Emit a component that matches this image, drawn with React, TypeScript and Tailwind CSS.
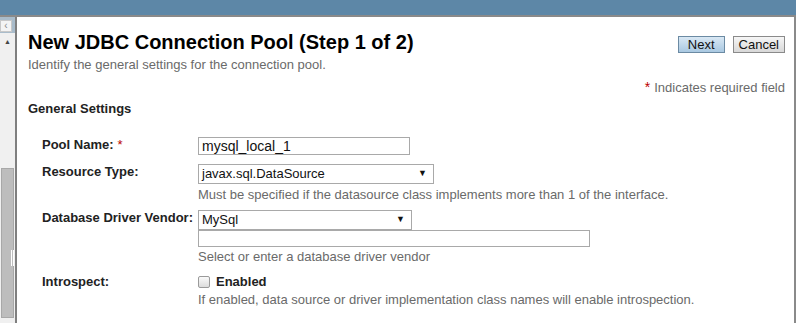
import React from 'react'

const font = { fontFamily: '"Liberation Sans", Arial, sans-serif' }

function Label({ children, required }: { children: React.ReactNode; required?: boolean }) {
  return (
    <div className="w-[156px] shrink-0 text-[13px] font-bold text-[#222] leading-[16px]">
      {children}
      {required && <span className="ml-1 text-[#b00] font-normal align-top text-[13px]">*</span>}
    </div>
  )
}

function Select({ value, width }: { value: string; width: string }) {
  return (
    <div className={`${width} h-[20px] border border-[#a9a9a9] bg-white flex items-center justify-between pl-[3px] pr-[6px] text-[13px] text-[#111]`}>
      <span>{value}</span>
      <span className="text-[9px]">▼</span>
    </div>
  )
}

export default function App() {
  return (
    <div className="w-[796px] h-[323px] bg-white overflow-hidden flex flex-col" style={font}>
      {/* top banner */}
      <div className="h-[15px] bg-[#5d87a7] shrink-0" />
      <div className="h-[2px] bg-[#8a8a8a] shrink-0" />
      <div className="flex flex-1 min-h-0">
        {/* left collapsed nav */}
        <div className="w-[15px] shrink-0 flex flex-col bg-[#f0f0f0]">
          <div className="h-[16px] bg-[#a9bccb] flex items-center pt-[2px]">
            <div className="w-[12px] h-[12px] bg-[#f4f4f4] border border-[#c8c8c8] flex items-center justify-center text-[10px] leading-none text-[#888]">
              ‹
            </div>
          </div>
          <div className="h-[135px] flex justify-center pt-[5px]">
            <span className="text-[7px] leading-none text-[#444]">▲</span>
          </div>
          <div className="flex-1 mx-[1px] mb-[5px] bg-[#bdbdbd] border border-[#a8a8a8] flex items-center justify-end">
            <div className="w-[3px] h-[16px] border-x border-white mr-[-1px] mt-[30px]" />
          </div>
        </div>
        <div className="w-[2px] bg-[#7f7f7f] shrink-0" />

        {/* main content */}
        <div className="flex-1 min-w-0 pl-[11px] pr-[9px] border-r-2 border-[#8a8a8a]">
          <div className="flex items-start justify-between pt-[13px]">
            <h1 className="text-[20px] font-bold leading-[24px] text-black">New JDBC Connection Pool (Step 1 of 2)</h1>
            <div className="flex gap-[8px] mt-[6px]">
              <button className="h-[17px] px-[9px] text-[13px] leading-none text-[#111] border border-[#6b8aa3] bg-gradient-to-b from-[#d9e8f4] to-[#a9c8e1]">
                Next
              </button>
              <button className="h-[17px] px-[5px] text-[13px] leading-none text-[#111] border border-[#8a8a8a] bg-gradient-to-b from-[#f6f6f6] to-[#d8d8d8]">
                Cancel
              </button>
            </div>
          </div>
          <p className="text-[13px] leading-[15px] text-[#6a6a6a] mt-[3px]">Identify the general settings for the connection pool.</p>
          <p className="text-[13px] leading-[15px] text-[#6a6a6a] text-right mt-[8px]">
            <span className="text-[#b00] text-[14px] mr-[4px]">*</span>Indicates required field
          </p>
          <h2 className="text-[13px] font-bold leading-[16px] text-[#222] mt-[6px]">General Settings</h2>

          <div className="pl-[14px] mt-[20px] flex flex-col">
            <div className="flex items-start">
              <Label required>Pool Name:</Label>
              <div className="w-[212px] h-[18px] border border-[#a9a9a9] bg-white pl-[3px] text-[14px] leading-[16px] text-[#111]">
                mysql_local_1
              </div>
            </div>

            <div className="flex items-start mt-[9px]">
              <Label>Resource Type:</Label>
              <div>
                <Select value="javax.sql.DataSource" width="w-[236px]" />
                <p className="text-[13px] leading-[15px] text-[#6a6a6a] mt-[3px]">
                  Must be specified if the datasource class implements more than 1 of the interface.
                </p>
              </div>
            </div>

            <div className="flex items-start mt-[8px]">
              <Label>Database Driver Vendor:</Label>
              <div>
                <Select value="MySql" width="w-[214px]" />
                <div className="w-[392px] h-[17px] border border-[#a9a9a9] bg-white" />
                <p className="text-[13px] leading-[15px] text-[#6a6a6a] mt-[2px]">Select or enter a database driver vendor</p>
              </div>
            </div>

            <div className="flex items-start mt-[10px]">
              <Label>Introspect:</Label>
              <div>
                <div className="flex items-center gap-[6px]">
                  <div className="w-[12px] h-[12px] rounded-[2px] border border-[#9a9a9a] bg-gradient-to-b from-[#fafafa] to-[#dcdcdc]" />
                  <span className="text-[13px] font-bold leading-[16px] text-[#222]">Enabled</span>
                </div>
                <p className="text-[13px] leading-[15px] text-[#6a6a6a] mt-[2px]">
                  If enabled, data source or driver implementation class names will enable introspection.
                </p>
              </div>
            </div>
          </div>
        </div>
      </div>
    </div>
  )
}
